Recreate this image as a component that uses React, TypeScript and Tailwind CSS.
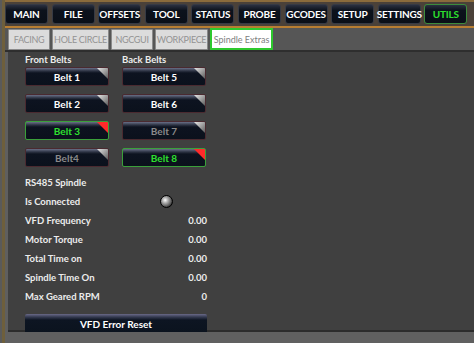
import * as React from "react";

const MAIN_TABS = ["MAIN", "FILE", "OFFSETS", "TOOL", "STATUS", "PROBE", "GCODES", "SETUP", "SETTINGS", "UTILS"];

const SUB_TABS: { label: string; w: string }[] = [
  { label: "FACING", w: "w-[42px]" },
  { label: "HOLE CIRCLE", w: "w-[57px]" },
  { label: "NGCGUI", w: "w-[42px]" },
  { label: "WORKPIECE", w: "w-[53px]" },
];

const ROWS: { label: string; value: string }[] = [
  { label: "VFD Frequency", value: "0.00" },
  { label: "Motor Torque", value: "0.00" },
  { label: "Total Time on", value: "0.00" },
  { label: "Spindle Time On", value: "0.00" },
  { label: "Max Geared RPM", value: "0" },
];

function Corner({ active }: { active: boolean }) {
  return (
    <svg className="absolute right-0 top-0" width="11" height="11" viewBox="0 0 11 11">
      <defs>
        <linearGradient id="cg" x1="0" y1="0" x2="1" y2="1">
          <stop offset="0" stopColor="#e8e8e8" />
          <stop offset="1" stopColor="#5a5a5a" />
        </linearGradient>
      </defs>
      <polygon points="0,0 11,0 11,11" fill={active ? "#ff2a2a" : "url(#cg)"} />
    </svg>
  );
}

function BeltButton({
  label,
  active = false,
  disabled = false,
}: {
  label: string;
  active?: boolean;
  disabled?: boolean;
}) {
  return (
    <div
      className={
        "relative w-[84px] h-[19px] rounded-[2px] overflow-hidden flex items-center justify-center bg-[linear-gradient(#6a7088_0px,#2c3242_3px,#0d1320_5px,#0b111c_100%)] " +
        (active ? "border border-[#3aa03a]" : "border border-[#4a2a30]")
      }
    >
      <span
        className={
          "text-[10px] font-bold leading-none " +
          (active ? "text-[#2ee02e]" : disabled ? "text-[#8a8a8a]" : "text-white")
        }
      >
        {label}
      </span>
      <Corner active={active} />
    </div>
  );
}

export default function App() {
  return (
    <div
      className="w-[474px] h-[343px] overflow-hidden bg-[#5f5f5f] flex"
      style={{ fontFamily: "Lato, 'Open Sans', sans-serif" }}
    >
      <div className="w-[2px] bg-[#5a5a5a]" />
      <div className="w-[3px] bg-[#6e5f3c]" />
      <div className="flex-1 flex flex-col">
        {/* main tab bar */}
        <div className="h-[28px] bg-[#4a4139] border-t-2 border-b-2 border-t-[#8a6b3c] border-b-[#b87e32] flex items-center gap-[3.6px]">
          {MAIN_TABS.map((t) => (
            <div
              key={t}
              className={
                "w-[43px] h-[20px] rounded-[3px] flex items-center justify-center bg-[linear-gradient(#2a3040,#0c121c_30%,#0a0f18)] " +
                (t === "UTILS" ? "border border-[#3c8c3c]" : "border border-[#363a44]")
              }
            >
              <span
                className={
                  "text-[10px] font-bold leading-none tracking-[-0.2px] " +
                  (t === "UTILS" ? "text-[#2ee02e]" : "text-white")
                }
              >
                {t}
              </span>
            </div>
          ))}
        </div>
        {/* sub tabs */}
        <div className="h-[24px] bg-[#565656] flex items-center gap-[2px] pl-[3px] border-b-2 border-[#2e2e2e]">
          {SUB_TABS.map((s) => (
            <div
              key={s.label}
              className={
                s.w +
                " h-[21px] bg-[#dcdcdc] border border-[#8a8a8a] rounded-[1px] flex items-center justify-center overflow-hidden"
              }
            >
              <span className="text-[9px] text-[#939393] leading-none whitespace-nowrap tracking-[-0.3px]">{s.label}</span>
            </div>
          ))}
          <div className="w-[63px] h-[22px] bg-white border-2 border-[#2ec82e] flex items-center justify-center">
            <span className="text-[9px] text-[#808080] leading-none whitespace-nowrap">Spindle Extras</span>
          </div>
        </div>
        {/* content */}
        <div className="flex-1 flex flex-col">
          <div className="h-[280px] bg-[#404040] ml-[3px] border-b-2 border-[#2c2c2c] pl-[17px] pt-[3px] flex flex-col">
            <div className="flex gap-[13px]">
              <div className="flex flex-col">
                <div className="text-[9.5px] font-bold text-[#ececec] leading-none h-[11px]">Front Belts</div>
                <div className="flex flex-col gap-[8px] mt-[1px]">
                  <BeltButton label="Belt 1" />
                  <BeltButton label="Belt 2" />
                  <BeltButton label="Belt 3" active />
                  <BeltButton label="Belt4" disabled />
                </div>
              </div>
              <div className="flex flex-col">
                <div className="text-[9.5px] font-bold text-[#ececec] leading-none h-[11px]">Back Belts</div>
                <div className="flex flex-col gap-[8px] mt-[1px]">
                  <BeltButton label="Belt 5" />
                  <BeltButton label="Belt 6" />
                  <BeltButton label="Belt 7" disabled />
                  <BeltButton label="Belt 8" active />
                </div>
              </div>
            </div>
            <div className="w-[182px] flex flex-col mt-[6px] text-[9.5px] font-bold text-[#ececec] leading-none">
              <div className="h-[19px] flex items-center">RS485 Spindle</div>
              <div className="h-[19px] flex items-center">
                <span className="w-[135px]">Is Connected</span>
                <span className="w-[13px] h-[13px] rounded-full bg-[radial-gradient(circle_at_38%_38%,#ffffff_0%,#b8b8b8_25%,#555_65%,#111_85%)] border border-black" />
              </div>
              {ROWS.map((r) => (
                <div key={r.label} className="h-[19px] flex items-center justify-between">
                  <span>{r.label}</span>
                  <span>{r.value}</span>
                </div>
              ))}
              <div className="mt-[8px] h-[19px] rounded-t-[2px] bg-[linear-gradient(#6a6a88_0px,#343a50_3px,#0d1522_6px,#0b131e_100%)] flex items-center justify-center">
                <span className="text-[10px] font-bold text-white leading-none">VFD Error Reset</span>
              </div>
            </div>
          </div>
          <div className="flex-1 bg-[#606060]" />
        </div>
      </div>
    </div>
  );
}
